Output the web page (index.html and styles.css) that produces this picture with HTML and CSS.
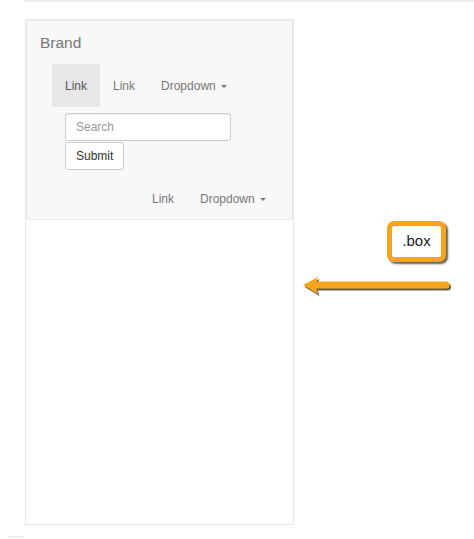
FILE: index.html
```html
<!DOCTYPE html>
<html lang="en">
<head>
  <meta charset="UTF-8">
  <meta name="viewport" content="width=device-width, initial-scale=1.0">
  <title>Navbar inside .box</title>
  <link rel="stylesheet" href="styles.css">
</head>
<body>
  <div class="topline"></div>

  <div class="page">
    <div class="box">
      <nav class="navbar">
        <a class="brand" href="#">Brand</a>
        <ul class="nav">
          <li class="active"><a href="#">Link</a></li>
          <li><a href="#">Link</a></li>
          <li><a href="#">Dropdown <span class="caret"></span></a></li>
        </ul>
        <form class="navbar-form">
          <input type="text" class="form-control" placeholder="Search">
          <button type="submit" class="btn">Submit</button>
        </form>
        <ul class="nav nav-right">
          <li><a href="#">Link</a></li>
          <li><a href="#">Dropdown <span class="caret"></span></a></li>
        </ul>
      </nav>
    </div>

    <!-- annotation pointing at the box -->
    <div class="annotation">
      <div class="label">.box</div>
      <svg class="arrow" width="150" height="24" viewBox="0 0 150 24">
        <g fill="#3b2a0c" opacity="0.75" transform="translate(1.5 2)">
          <line x1="14" y1="10" x2="144" y2="10" stroke="#3b2a0c" stroke-width="7" stroke-linecap="round"/>
          <polygon points="1,10 16,2 13,10 16,19"/>
        </g>
        <g fill="#f7a51e">
          <line x1="14" y1="10" x2="144" y2="10" stroke="#f7a51e" stroke-width="7" stroke-linecap="round"/>
          <polygon points="1,10 16,2 13,10 16,19"/>
        </g>
      </svg>
    </div>
  </div>

  <div class="footmark"></div>
</body>
</html>
```

FILE: styles.css
```css
body {
  margin: 0;
  font-family: "Liberation Sans", Arial, sans-serif;
  font-size: 12px;
  color: #333;
  background: #fff;
}

.topline {
  margin-left: 25px;
  height: 2px;
  background: #ececec;
}

.page {
  display: flex;
  margin-top: 17px;
  padding-left: 25px;
}

.box {
  width: 267px;
  height: 504px;
  border: 1px solid #e8e8e8;
}

.navbar {
  background: #f8f8f8;
  border: 1px solid #e7e7e7;
  border-radius: 3px;
}

.brand {
  display: block;
  height: 17px;
  padding: 13px 13px;
  font-size: 15.5px;
  line-height: 17px;
  color: #777;
  text-decoration: none;
}

.nav {
  display: flex;
  margin: 0;
  padding: 0 0 0 25px;
  list-style: none;
}

.nav a {
  display: block;
  padding: 14px 13px 12px;
  line-height: 17px;
  color: #777;
  text-decoration: none;
}

.nav .active a {
  background: #e7e7e7;
  color: #555;
}

.caret {
  display: inline-block;
  width: 0;
  height: 0;
  margin-left: 2px;
  vertical-align: middle;
  border-top: 3.5px solid #777;
  border-left: 3.5px solid transparent;
  border-right: 3.5px solid transparent;
}

.navbar-form {
  display: flex;
  flex-direction: column;
  align-items: flex-start;
  margin: 6px 0 6px 38px;
}

.form-control {
  box-sizing: border-box;
  width: 166px;
  height: 28px;
  padding: 5px 10px;
  font-family: inherit;
  font-size: 12px;
  color: #555;
  border: 1px solid #ccc;
  border-radius: 3px;
  box-shadow: inset 0 1px 1px rgba(0, 0, 0, 0.075);
}

.form-control::placeholder {
  color: #999;
}

.btn {
  box-sizing: border-box;
  height: 28px;
  margin-top: 1px;
  padding: 5px 10px;
  font-family: inherit;
  font-size: 12px;
  color: #333;
  background: #fff;
  border: 1px solid #ccc;
  border-radius: 3px;
}

.nav-right {
  justify-content: flex-end;
  padding: 0 13px 0 0;
}

.nav-right a {
  padding: 15px 13px 11px;
}

.annotation {
  display: flex;
  flex-direction: column;
  align-items: flex-end;
  width: 150px;
  margin-left: 8px;
  padding-top: 202px;
}

.label {
  box-sizing: border-box;
  width: 59px;
  height: 41px;
  margin-right: 6px;
  padding-top: 6px;
  text-align: center;
  font-size: 15px;
  color: #1a1a1a;
  background: #fff;
  border: 5px solid #f7a51e;
  border-radius: 7px;
  box-shadow: 2px 2px 2px rgba(40, 25, 0, 0.7);
}

.arrow {
  display: block;
  margin-top: 13px;
}

.footmark {
  width: 16px;
  height: 2px;
  margin: 11px 0 0 8px;
  background: #ededed;
}
```
